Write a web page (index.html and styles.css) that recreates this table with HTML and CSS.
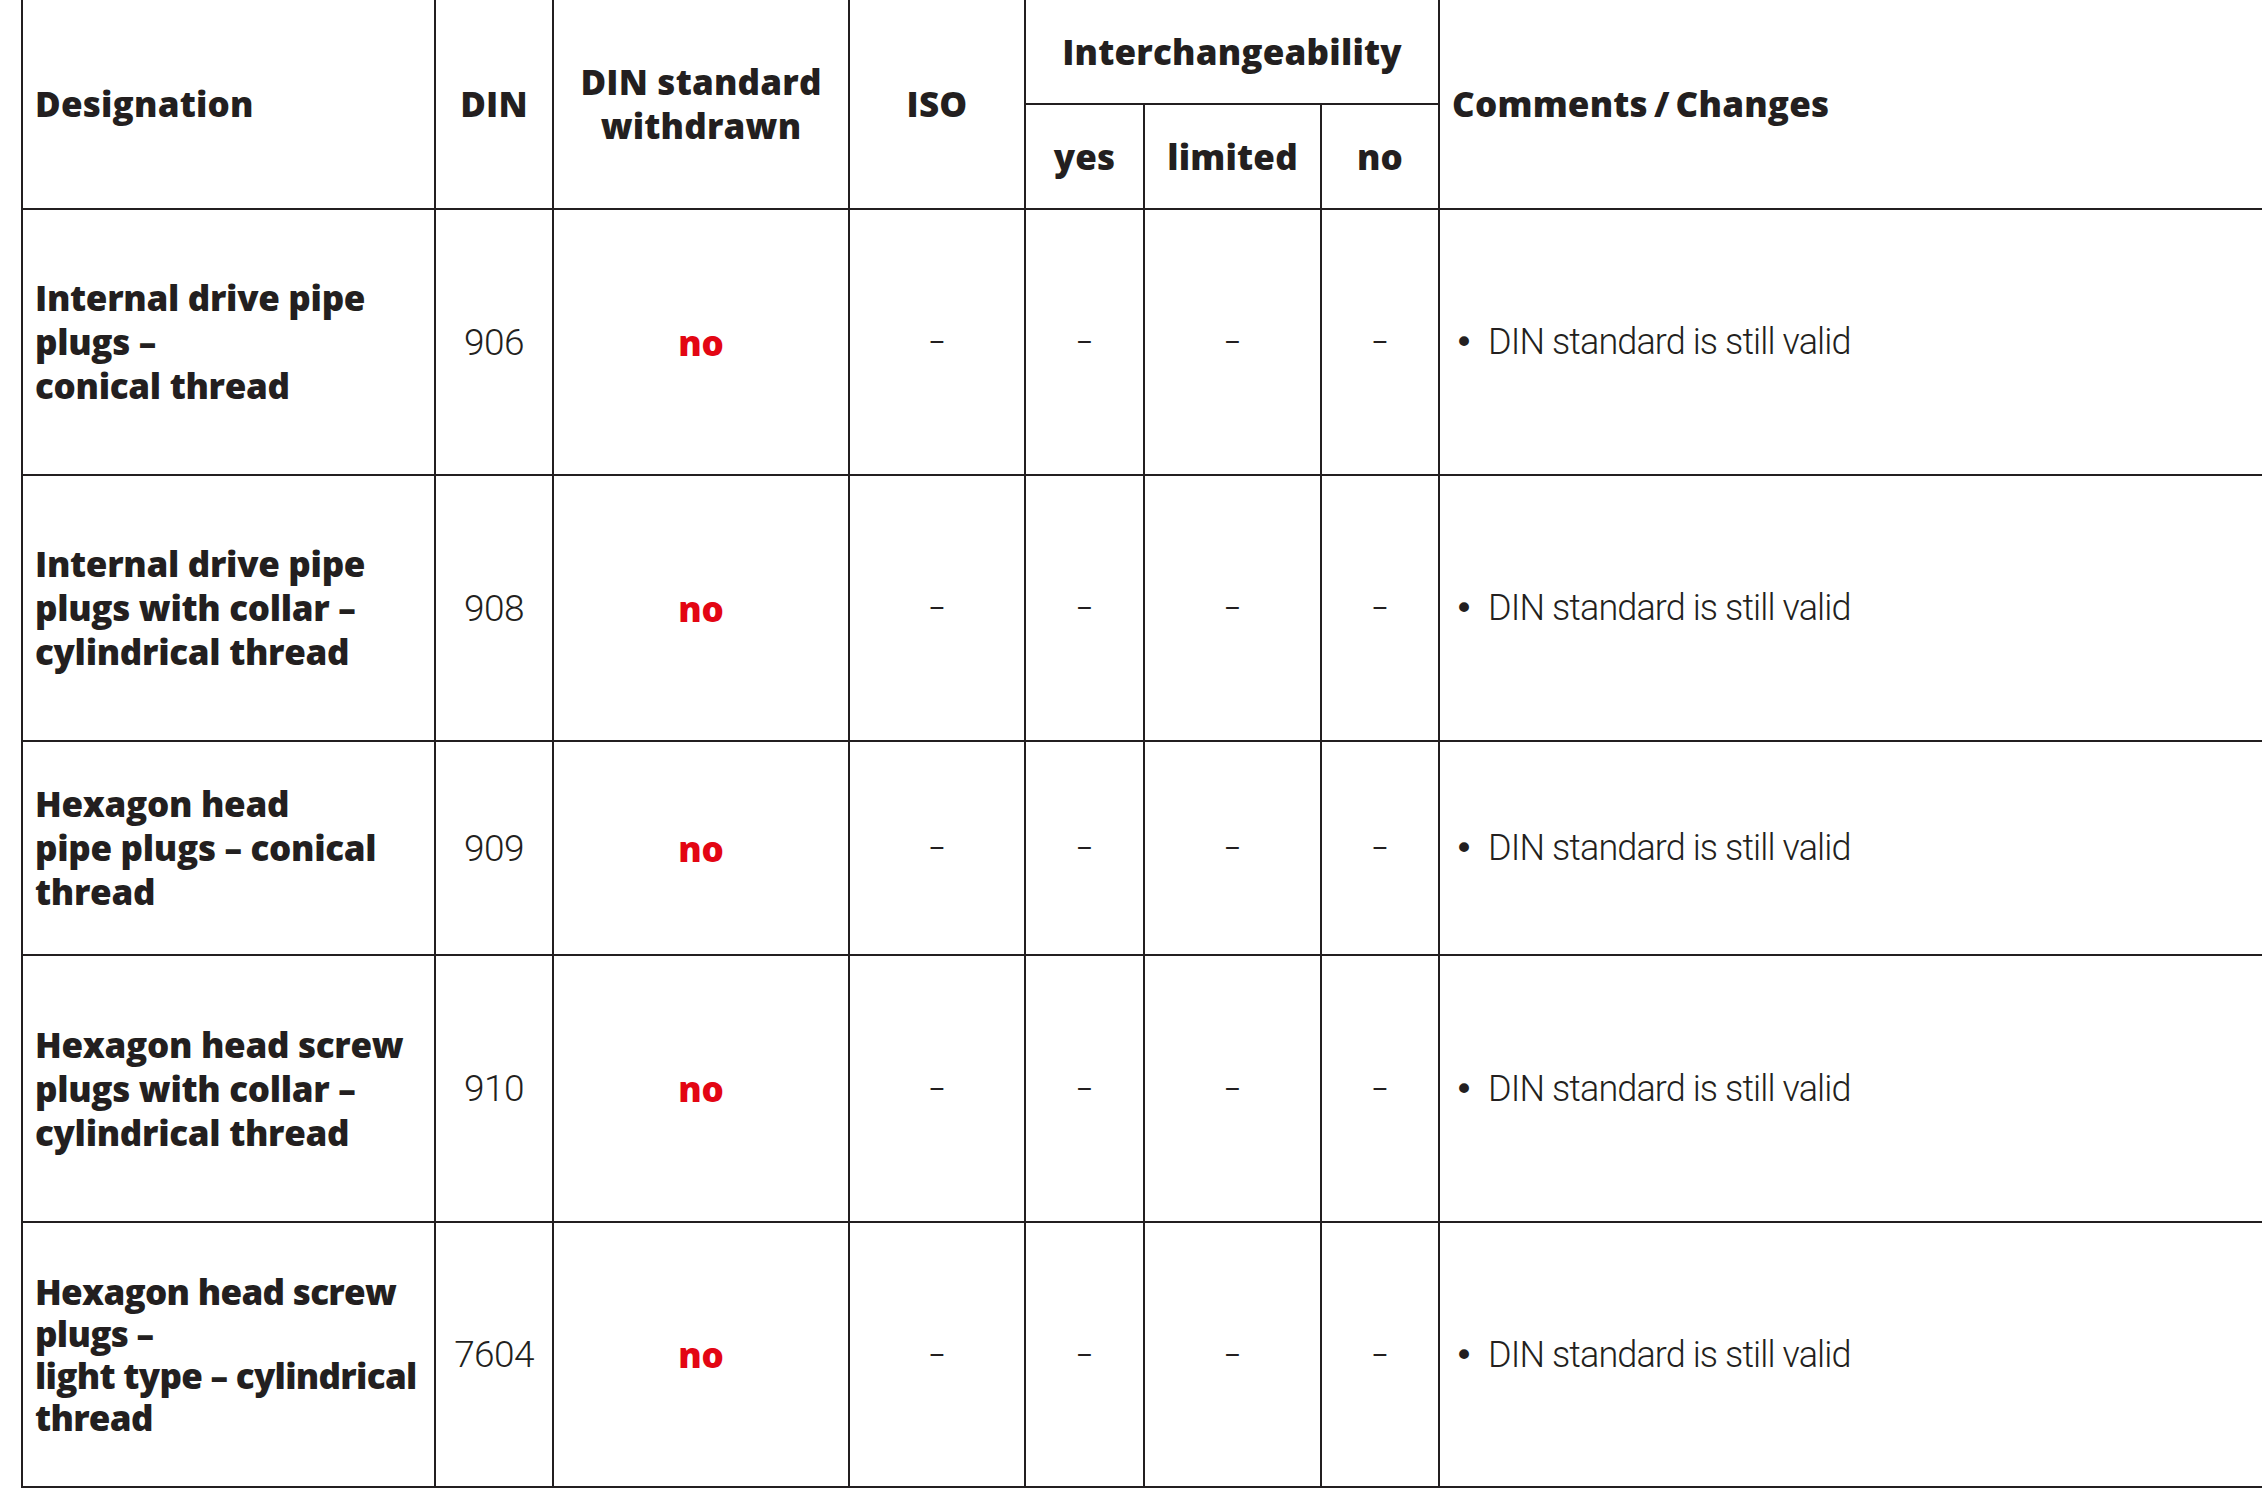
FILE: index.html
```html
<!DOCTYPE html>
<html lang="en">
<head>
<meta charset="utf-8">
<title>DIN / ISO interchangeability</title>
<link rel="stylesheet" href="styles.css">
</head>
<body>
<table class="din-table">
  <colgroup>
    <col class="c-desig">
    <col class="c-din">
    <col class="c-withdrawn">
    <col class="c-iso">
    <col class="c-yes">
    <col class="c-limited">
    <col class="c-no">
    <col class="c-comments">
  </colgroup>
  <thead>
    <tr class="head-top">
      <th rowspan="2" class="th-left first">Designation</th>
      <th rowspan="2">DIN</th>
      <th rowspan="2">DIN standard<br>withdrawn</th>
      <th rowspan="2">ISO</th>
      <th colspan="3" class="group">Interchangeability</th>
      <th rowspan="2" class="th-left last">Comments&thinsp;/&thinsp;Changes</th>
    </tr>
    <tr class="head-sub">
      <th>yes</th>
      <th>limited</th>
      <th>no</th>
    </tr>
  </thead>
  <tbody>
    <tr class="row-tall">
      <td class="desig first">Internal drive pipe<br>plugs –<br>conical thread</td>
      <td class="num">906</td>
      <td class="withdrawn">no</td>
      <td class="dash">–</td>
      <td class="dash">–</td>
      <td class="dash">–</td>
      <td class="dash thin">–</td>
      <td class="comment last"><span class="bullet">•</span>DIN standard is still valid</td>
    </tr>
    <tr class="row-tall">
      <td class="desig first">Internal drive pipe<br>plugs with collar –<br>cylindrical thread</td>
      <td class="num">908</td>
      <td class="withdrawn">no</td>
      <td class="dash">–</td>
      <td class="dash">–</td>
      <td class="dash">–</td>
      <td class="dash thin">–</td>
      <td class="comment last"><span class="bullet">•</span>DIN standard is still valid</td>
    </tr>
    <tr class="row-short">
      <td class="desig first">Hexagon head<br>pipe plugs – conical<br>thread</td>
      <td class="num">909</td>
      <td class="withdrawn">no</td>
      <td class="dash">–</td>
      <td class="dash">–</td>
      <td class="dash">–</td>
      <td class="dash thin">–</td>
      <td class="comment last"><span class="bullet">•</span>DIN standard is still valid</td>
    </tr>
    <tr class="row-tall2">
      <td class="desig first">Hexagon head screw<br>plugs with collar –<br>cylindrical thread</td>
      <td class="num">910</td>
      <td class="withdrawn">no</td>
      <td class="dash">–</td>
      <td class="dash">–</td>
      <td class="dash">–</td>
      <td class="dash thin">–</td>
      <td class="comment last"><span class="bullet">•</span>DIN standard is still valid</td>
    </tr>
    <tr class="row-last">
      <td class="desig tight first">Hexagon head screw<br>plugs –<br>light type – cylindrical<br>thread</td>
      <td class="num">7604</td>
      <td class="withdrawn">no</td>
      <td class="dash">–</td>
      <td class="dash">–</td>
      <td class="dash">–</td>
      <td class="dash thin">–</td>
      <td class="comment last"><span class="bullet">•</span>DIN standard is still valid</td>
    </tr>
  </tbody>
</table>
</body>
</html>
```

FILE: styles.css
```css
html, body {
  margin: 0;
  padding: 0;
  background: #ffffff;
}

body {
  color: #231f20;
  font-family: "Open Sans", "Lato", "DejaVu Sans", sans-serif;
  overflow: hidden;
}

.din-table {
  margin-left: 21px;
  width: 2243px;
  table-layout: fixed;
  border-collapse: collapse;
}

.c-desig { width: 413px; }
.c-din { width: 118px; }
.c-withdrawn { width: 296px; }
.c-iso { width: 176px; }
.c-yes { width: 119px; }
.c-limited { width: 177px; }
.c-no { width: 118px; }
.c-comments { width: 826px; }

.din-table th,
.din-table td {
  border: 2px solid #231f20;
  padding: 0;
  vertical-align: middle;
  text-align: center;
}

.din-table thead tr.head-top th {
  border-top: none;
}

.din-table .last {
  border-right: none;
}

/* header */
.din-table th {
  font-family: "Open Sans", "Lato", sans-serif;
  font-weight: 800;
  font-size: 35px;
  line-height: 44px;
  letter-spacing: 0.2px;
}

.head-top { height: 104px; }
.head-sub { height: 105px; }

.din-table th.th-left {
  text-align: left;
  padding-left: 12px;
}

/* body rows */
.row-tall { height: 266px; }
.row-tall2 { height: 267px; }
.row-short { height: 214px; }
.row-last { height: 265px; }

.desig {
  text-align: left !important;
  padding-left: 12px !important;
  font-family: "Open Sans", "Lato", sans-serif;
  font-weight: 800;
  font-size: 35px;
  line-height: 44px;
  letter-spacing: -0.3px;
  white-space: nowrap;
}

.desig.tight {
  line-height: 42px;
  letter-spacing: -0.7px;
}

.num {
  font-family: "Roboto", "Lato", sans-serif;
  font-weight: 300;
  font-size: 37px;
  letter-spacing: -0.6px;
}

.withdrawn {
  color: #e30613;
  font-family: "Open Sans", "Lato", sans-serif;
  font-weight: 800;
  font-size: 35px;
}

.dash {
  font-family: "Roboto", "Lato", sans-serif;
  font-weight: 400;
  font-size: 26px;
}

.din-table td.thin {
  border-left-width: 1px;
}

.comment {
  text-align: left !important;
  padding-left: 13px !important;
  font-family: "Roboto", "Lato", sans-serif;
  font-weight: 300;
  font-size: 36px;
  letter-spacing: -0.9px;
}

.bullet {
  display: inline-block;
  width: 35px;
  padding-left: 1px;
  box-sizing: border-box;
  font-family: "DejaVu Sans", sans-serif;
  font-weight: 400;
  font-size: 34px;
}
```
